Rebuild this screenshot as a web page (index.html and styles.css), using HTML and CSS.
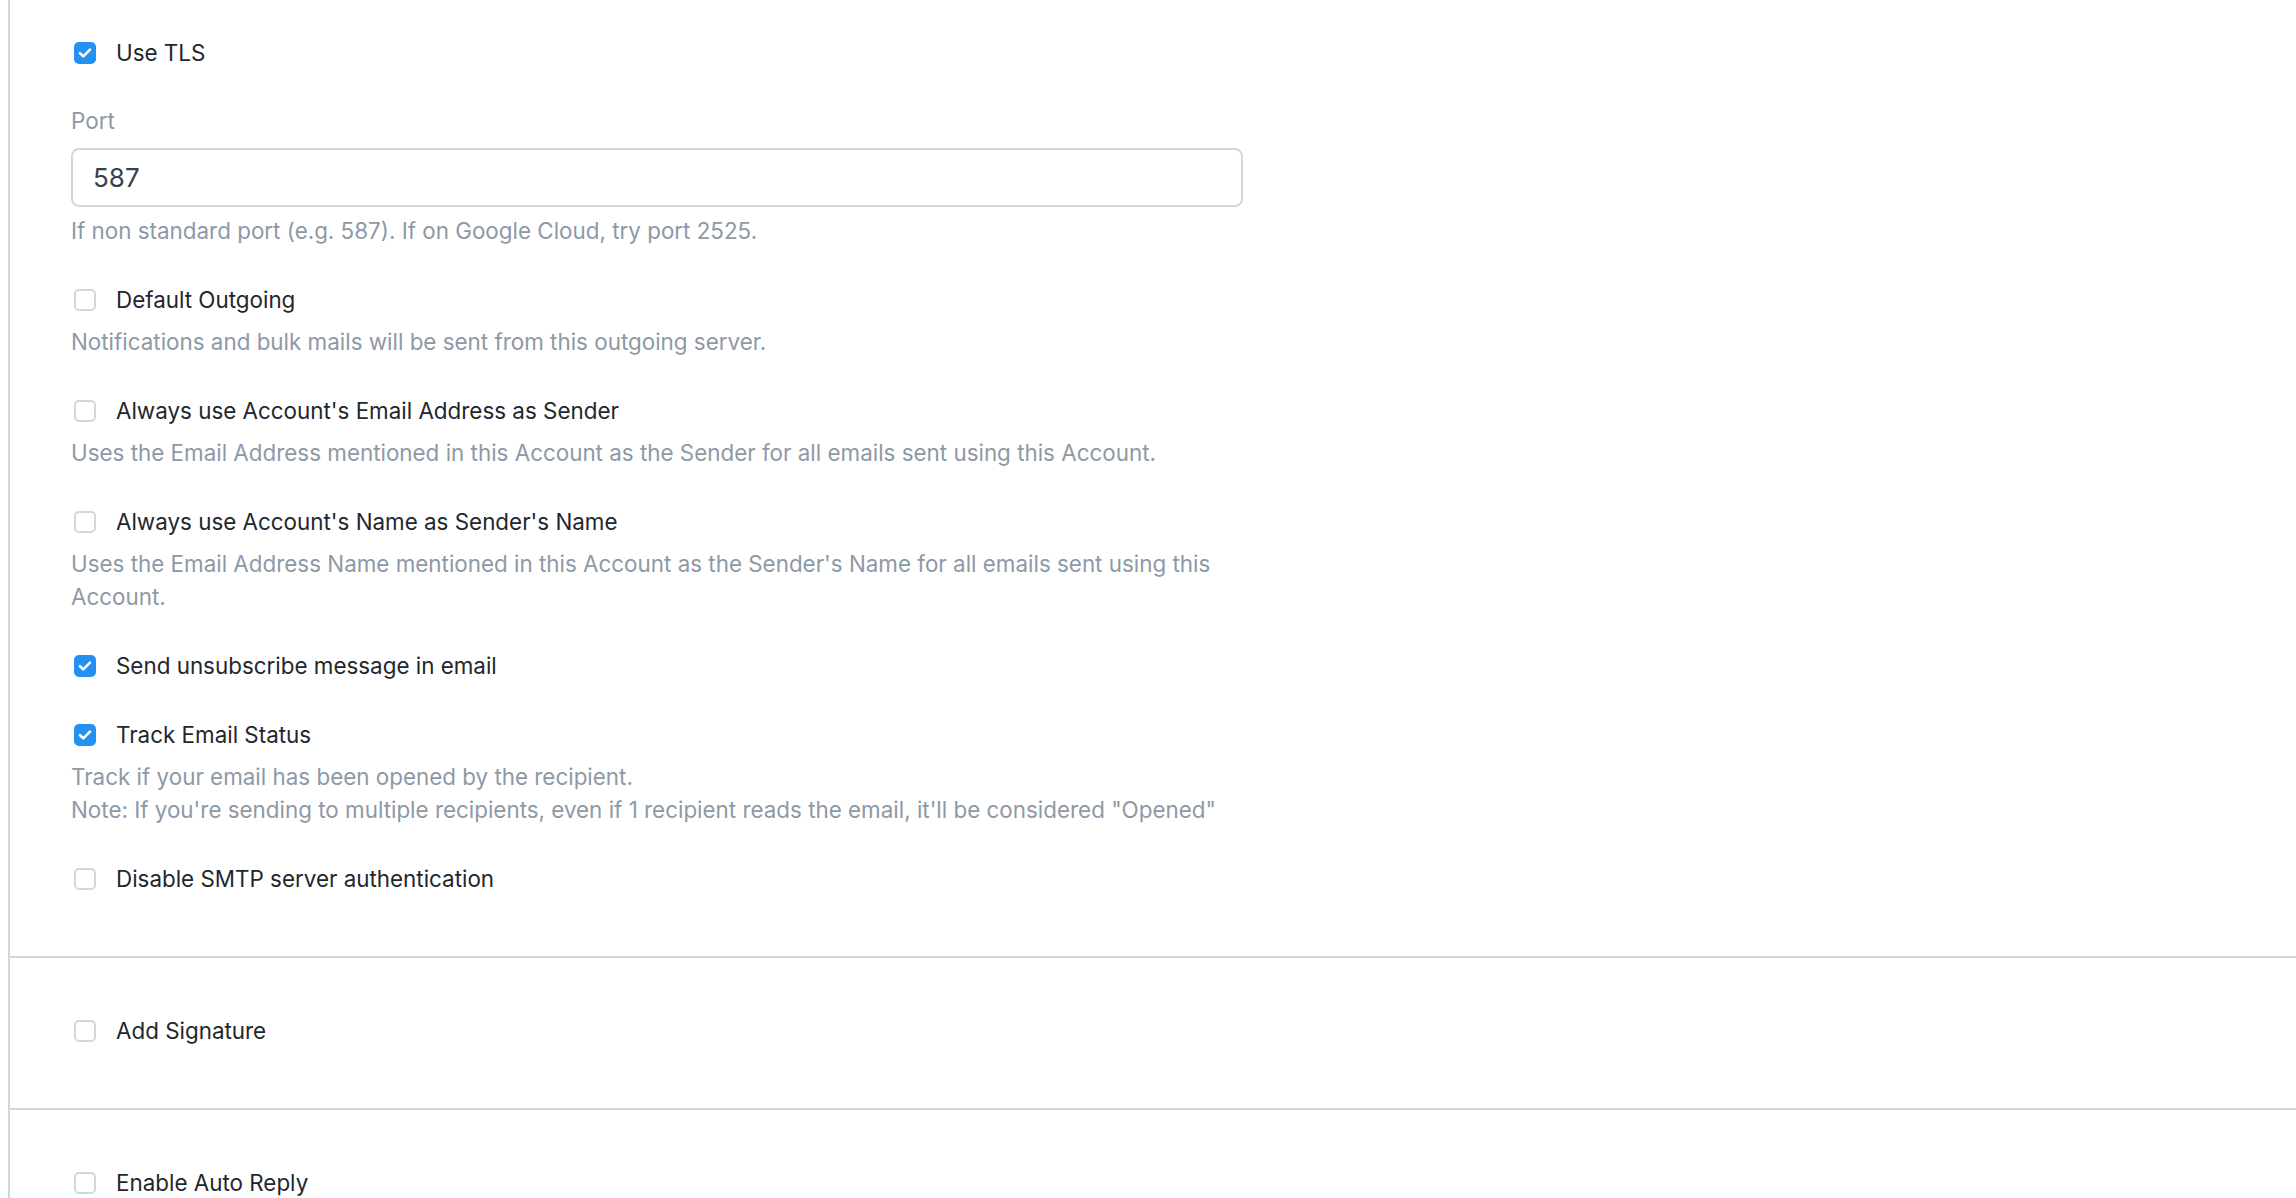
FILE: index.html
```html
<!DOCTYPE html>
<html lang="en">
  <head>
    <meta charset="UTF-8" />
    <meta name="viewport" content="width=device-width, initial-scale=1.0" />
    <title>Email Account</title>
    <link rel="stylesheet" href="styles.css">
  </head>
  <body>
    <div class="page">
      <div class="form-layout">
        <div class="form-section first">
          <div class="field">
            <label class="check-row">
              <input type="checkbox" checked />
              <span class="check-label">Use TLS</span>
            </label>
          </div>

          <div class="field port-field">
            <label class="control-label">Port</label>
            <input class="form-control" type="text" value="587" />
            <p class="help-box">If non standard port (e.g. 587). If on Google Cloud, try port 2525.</p>
          </div>

          <div class="field">
            <label class="check-row">
              <input type="checkbox" />
              <span class="check-label">Default Outgoing</span>
            </label>
            <p class="help-box">Notifications and bulk mails will be sent from this outgoing server.</p>
          </div>

          <div class="field">
            <label class="check-row">
              <input type="checkbox" />
              <span class="check-label">Always use Account's Email Address as Sender</span>
            </label>
            <p class="help-box">Uses the Email Address mentioned in this Account as the Sender for all emails sent using this Account.</p>
          </div>

          <div class="field">
            <label class="check-row">
              <input type="checkbox" />
              <span class="check-label">Always use Account's Name as Sender's Name</span>
            </label>
            <p class="help-box">Uses the Email Address Name mentioned in this Account as the Sender's Name for all emails sent using this Account.</p>
          </div>

          <div class="field">
            <label class="check-row">
              <input type="checkbox" checked />
              <span class="check-label">Send unsubscribe message in email</span>
            </label>
          </div>

          <div class="field">
            <label class="check-row">
              <input type="checkbox" checked />
              <span class="check-label">Track Email Status</span>
            </label>
            <p class="help-box">Track if your email has been opened by the recipient.<br />Note: If you're sending to multiple recipients, even if 1 recipient reads the email, it'll be considered "Opened"</p>
          </div>

          <div class="field">
            <label class="check-row">
              <input type="checkbox" />
              <span class="check-label">Disable SMTP server authentication</span>
            </label>
          </div>
        </div>

        <div class="form-section">
          <div class="field">
            <label class="check-row">
              <input type="checkbox" />
              <span class="check-label">Add Signature</span>
            </label>
          </div>
        </div>

        <div class="form-section">
          <div class="field">
            <label class="check-row">
              <input type="checkbox" />
              <span class="check-label">Enable Auto Reply</span>
            </label>
          </div>
        </div>
      </div>
    </div>
  </body>
</html>
```

FILE: styles.css
```css
* {
  margin: 0;
  padding: 0;
  box-sizing: border-box;
}

body {
  font-family: Inter, "Noto Sans", sans-serif;
  background-color: #fff;
  color: #1f272e;
  overflow: hidden;
}

.page {
  padding-left: 8px;
  height: 1198px;
  overflow: hidden;
}

.form-layout {
  border-left: 2px solid #d1d8dd;
  min-height: 100%;
}

.form-section {
  border-top: 2px solid #d1d8dd;
  padding: 57px 61px 24px;
}

.form-section.first {
  border-top: none;
  padding-top: 37px;
}

.form-section .field {
  width: 1172px;
  margin-bottom: 37px;
}

.form-section:last-child .field {
  margin-bottom: 0;
}

.check-row {
  display: flex;
  align-items: center;
  height: 32px;
  padding-left: 3px;
}

.check-row input {
  appearance: none;
  -webkit-appearance: none;
  width: 22px;
  height: 22px;
  border: 2px solid #d1d8dd;
  border-radius: 5px;
  background: #fff;
  margin-right: 20px;
  flex-shrink: 0;
}

.check-row input:checked {
  border-color: #2490ef;
  background: #2490ef url("data:image/svg+xml;utf8,<svg xmlns='http://www.w3.org/2000/svg' viewBox='0 0 22 22'><path d='M6 11.2l3.3 3.2 6.7-6.8' fill='none' stroke='white' stroke-width='2.6' stroke-linecap='round' stroke-linejoin='round'/></svg>") center / 22px 22px no-repeat;
}

.check-label {
  font-size: 22.4px;
  line-height: 32px;
  color: #1f272e;
}

.control-label {
  display: block;
  font-size: 22.5px;
  line-height: 30px;
  color: #8d99a6;
  margin-bottom: 12px;
}

.port-field {
  margin-top: 4px;
}

.form-control {
  display: block;
  width: 100%;
  height: 59px;
  border: 2px solid #d1d8dd;
  border-radius: 8px;
  padding: 0 20px;
  font-family: inherit;
  font-size: 26px;
  color: #36414c;
  background: #fff;
  outline: none;
}

.help-box {
  font-size: 22.4px;
  line-height: 33px;
  color: #8d99a6;
  margin-top: 9px;
}

.port-field .help-box {
  margin-top: 7px;
}
```
